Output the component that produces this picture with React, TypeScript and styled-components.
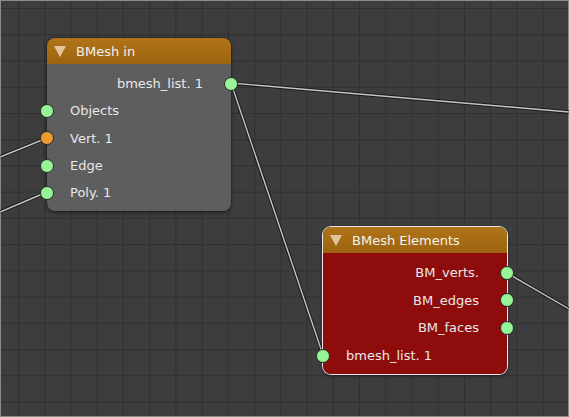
import React from 'react';
import styled, { createGlobalStyle } from 'styled-components';

//Styles
const GlobalStyle = createGlobalStyle`
  html, body {
    margin: 0;
    padding: 0;
    background: #3d3d3d;
  }
`;

const Canvas = styled.div`
  position: relative;
  width: 569px;
  height: 417px;
  overflow: hidden;
  font-family: 'DejaVu Sans', 'Liberation Sans', sans-serif;
  font-size: 13px;
  background-color: #3d3d3d;
  background-image: linear-gradient(to right, #303030 1px, transparent 1px),
    linear-gradient(to bottom, #303030 1px, transparent 1px);
  background-size: 26.24px 26.24px;
  background-position: 18px 8px;
  box-shadow: inset 0 0 0 1px #8c8c8c;
`;

const Wires = styled.svg`
  position: absolute;
  left: 0;
  top: 0;
  width: 569px;
  height: 417px;
`;

const NodeBox = styled.div<{ $x: number; $y: number; $selected?: boolean }>`
  position: absolute;
  left: ${p => p.$x}px;
  top: ${p => p.$y}px;
  width: 184px;
  border-radius: 8px;
  box-shadow: ${p =>
    p.$selected
      ? '0 0 0 1px #e8e8e8, 0 2px 4px rgba(0,0,0,0.45)'
      : '0 0 0 1px rgba(30,30,30,0.5), 0 2px 4px rgba(0,0,0,0.4)'};
`;

const Header = styled.div`
  display: flex;
  align-items: center;
  gap: 10px;
  height: 26px;
  padding-left: 7px;
  border-radius: 8px 8px 0 0;
  background: linear-gradient(to bottom, #b07418, #9d6410);
  color: #f2f2f2;
`;

const Body = styled.div<{ $bg: string }>`
  display: flex;
  flex-direction: column;
  padding: 6px 0 5px;
  border-radius: 0 0 8px 8px;
  background: ${p => p.$bg};
`;

const Row = styled.div<{ $side: 'in' | 'out'; $h: number }>`
  position: relative;
  display: flex;
  align-items: center;
  justify-content: ${p => (p.$side === 'out' ? 'flex-end' : 'flex-start')};
  height: ${p => p.$h}px;
  padding: 0 28px 0 23px;
  color: #e8e8e8;
  white-space: nowrap;
`;

const SocketDot = styled.span<{ $side: 'in' | 'out'; $color: string }>`
  position: absolute;
  top: 50%;
  ${p => (p.$side === 'out' ? 'right: -7px;' : 'left: -7px;')}
  width: 12px;
  height: 12px;
  margin-top: -7px;
  border-radius: 50%;
  border: 1px solid #2a2a2a;
  background: ${p => p.$color};
`;

const COLORS = {
  green: '#97f497',
  orange: '#eb9a2e',
};

type Socket = { label: string; side: 'in' | 'out'; color?: keyof typeof COLORS };
type NodeDef = {
  title: string;
  x: number;
  y: number;
  body: string;
  rowHeight: number;
  selected?: boolean;
  sockets: Socket[];
};

const nodes: NodeDef[] = [
  {
    title: 'BMesh in',
    x: 47,
    y: 38,
    body: 'rgba(101,101,101,0.82)',
    rowHeight: 27.3,
    sockets: [
      { label: 'bmesh_list. 1', side: 'out' },
      { label: 'Objects', side: 'in' },
      { label: 'Vert. 1', side: 'in', color: 'orange' },
      { label: 'Edge', side: 'in' },
      { label: 'Poly. 1', side: 'in' },
    ],
  },
  {
    title: 'BMesh Elements',
    x: 323,
    y: 227,
    body: 'rgba(148,10,10,0.94)',
    rowHeight: 27.6,
    selected: true,
    sockets: [
      { label: 'BM_verts.', side: 'out' },
      { label: 'BM_edges', side: 'out' },
      { label: 'BM_faces', side: 'out' },
      { label: 'bmesh_list. 1', side: 'in' },
    ],
  },
];

const links: [number, number, number, number][] = [
  [231, 83, 569, 112],
  [231, 83, 323, 355],
  [507, 273, 569, 309],
  [0, 157, 47, 138],
  [0, 212, 47, 192],
];

const Collapse = () => (
  <svg width="12" height="11" viewBox="0 0 12 11">
    <polygon points="0,0 12,0 6,11" fill="#e4c49c" />
  </svg>
);

const Node = ({ node }: { node: NodeDef }) => (
  <NodeBox $x={node.x} $y={node.y} $selected={node.selected}>
    <Header>
      <Collapse />
      <span>{node.title}</span>
    </Header>
    <Body $bg={node.body}>
      {node.sockets.map(s => (
        <Row key={s.label + s.side} $side={s.side} $h={node.rowHeight}>
          {s.label}
          <SocketDot $side={s.side} $color={COLORS[s.color || 'green']} />
        </Row>
      ))}
    </Body>
  </NodeBox>
);

export default function App() {
  return (
    <>
      <GlobalStyle />
      <Canvas>
        <Wires viewBox="0 0 569 417">
          {links.map(([x1, y1, x2, y2], i) => (
            <g key={i}>
              <line x1={x1} y1={y1} x2={x2} y2={y2} stroke="#1c1c1c" strokeWidth={3.5} />
              <line x1={x1} y1={y1} x2={x2} y2={y2} stroke="#c4c4c4" strokeWidth={1.4} />
            </g>
          ))}
        </Wires>
        {nodes.map(n => (
          <Node key={n.title} node={n} />
        ))}
      </Canvas>
    </>
  );
}
